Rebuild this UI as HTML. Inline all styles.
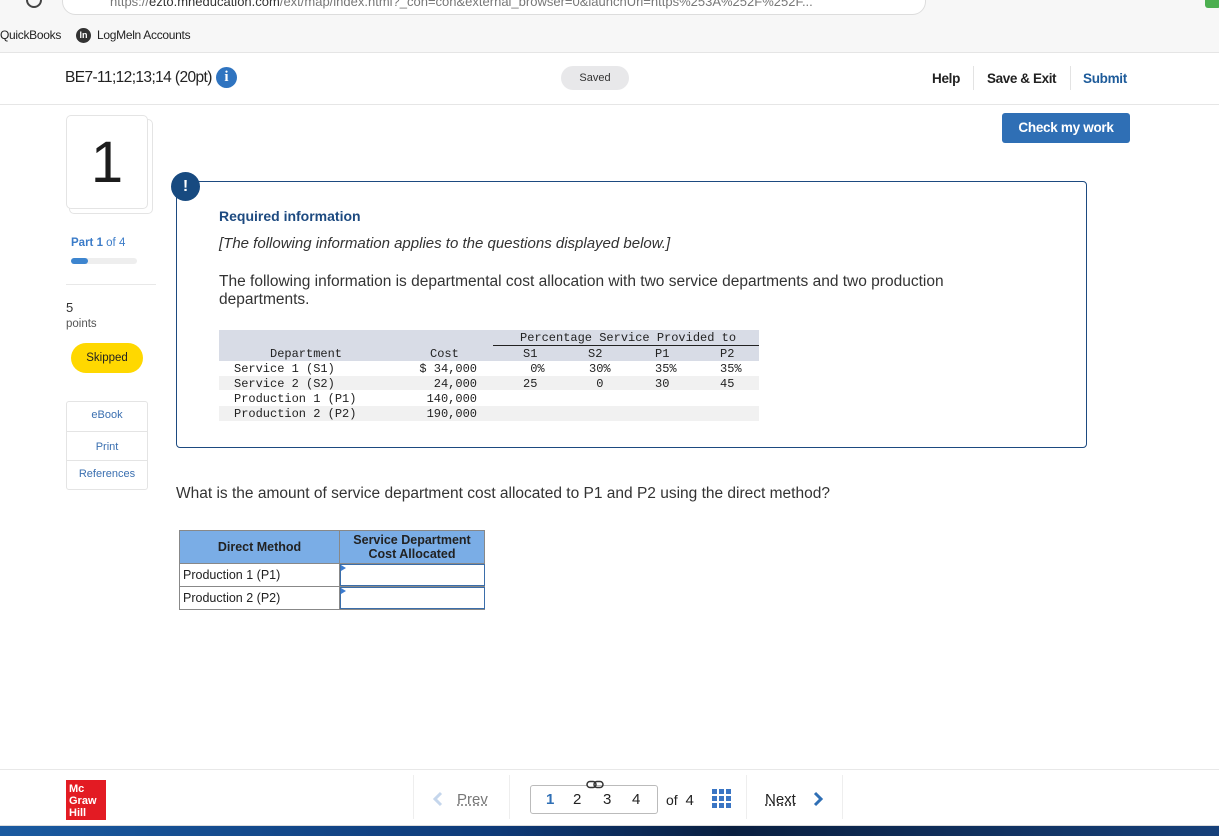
<!DOCTYPE html>
<html><head><meta charset="utf-8"><style>
*{box-sizing:border-box;margin:0;padding:0}
body{width:1219px;height:836px;overflow:hidden;background:#fff;font-family:"Liberation Sans",Arial,sans-serif;position:relative;color:#222}
.abs{position:absolute}
.mono{font-family:"Liberation Mono","DejaVu Sans Mono",monospace;font-size:12px;color:#222}
</style></head><body>
<div class="abs" style="left:0;top:0;width:1219px;height:53px;background:#f7f7f7;border-bottom:1px solid #e5e5e5"></div>
<div class="abs" style="left:62px;top:-12px;width:864px;height:27px;background:#fff;border:1px solid #ddd;border-radius:14px"></div>
<div class="abs" style="left:110px;top:-6px;font-size:13px;color:#777;white-space:nowrap">https://<b style="color:#333;font-weight:normal">ezto.mheducation.com</b>/ext/map/index.html?_con=con&amp;external_browser=0&amp;launchUrl=https%253A%252F%252F...</div>
<div class="abs" style="left:26px;top:-8px;width:16px;height:16px;border:2px solid #444;border-radius:50%"></div>
<div class="abs" style="left:0;top:28px;font-size:12px;color:#222;letter-spacing:-0.3px">QuickBooks</div>
<div class="abs" style="left:76px;top:28px;width:15px;height:15px;border-radius:50%;background:#333;color:#fff;font-size:9px;text-align:center;line-height:15px;font-weight:bold">ln</div>
<div class="abs" style="left:97px;top:28px;font-size:12px;color:#222;letter-spacing:-0.3px">LogMeln Accounts</div>
<div class="abs" style="left:1205px;top:-6px;width:16px;height:14px;background:#4caf50;border-radius:3px"></div>
<div class="abs" style="left:0;top:104px;width:1219px;height:1px;background:#e6e6e6"></div>
<div class="abs" style="left:65px;top:69px;font-size:15.5px;color:#222;letter-spacing:-0.6px">BE7-11;12;13;14 (20pt)</div>
<div class="abs" style="left:216px;top:67px;width:21px;height:21px;border-radius:50%;background:#2f74c0;color:#fff;font:bold 15px 'Liberation Serif',serif;text-align:center;line-height:21px">i</div>
<div class="abs" style="left:561px;top:66px;width:68px;height:24px;border-radius:12px;background:#e8e8ea;font-size:11px;color:#333;text-align:center;line-height:24px">Saved</div>
<div class="abs" style="left:932px;top:71px;font-size:13.5px;font-weight:bold;color:#222;letter-spacing:-0.3px">Help</div>
<div class="abs" style="left:973px;top:66px;width:1px;height:24px;background:#e3e3e3"></div>
<div class="abs" style="left:987px;top:71px;font-size:13.5px;font-weight:bold;color:#222;letter-spacing:-0.4px">Save &amp; Exit</div>
<div class="abs" style="left:1070px;top:66px;width:1px;height:24px;background:#e3e3e3"></div>
<div class="abs" style="left:1083px;top:71px;font-size:13.5px;font-weight:bold;color:#1d5b9a;letter-spacing:-0.3px">Submit</div>
<div class="abs" style="left:1002px;top:113px;width:128px;height:30px;background:#2f6fb5;border-radius:3px;color:#fff;font-size:13.5px;font-weight:bold;text-align:center;line-height:30px;letter-spacing:-0.3px">Check my work</div>
<div class="abs" style="left:69px;top:119px;width:84px;height:95px;border:1px solid #e4e4e4;border-radius:5px"></div>
<div class="abs" style="left:66px;top:115px;width:82px;height:94px;border:1px solid #e4e4e4;border-radius:5px;background:#fff;text-align:center;font-size:58px;line-height:94px;color:#1c1c1c">1</div>
<div class="abs" style="left:71px;top:237px;font-size:11.5px;color:#3a7bc8"><b>Part 1</b> of 4</div>
<div class="abs" style="left:71px;top:258px;width:66px;height:6px;border-radius:3px;background:#eee"></div>
<div class="abs" style="left:71px;top:258px;width:17px;height:6px;border-radius:3px;background:#3d85cf"></div>
<div class="abs" style="left:66px;top:284px;width:90px;height:1px;background:#e8e8e8"></div>
<div class="abs" style="left:66px;top:300px;font-size:13px;color:#333">5</div>
<div class="abs" style="left:66px;top:318px;font-size:11.5px;color:#555">points</div>
<div class="abs" style="left:71px;top:343px;width:72px;height:30px;border-radius:15px;background:#ffd800;font-size:11.5px;text-align:center;line-height:30px;color:#222">Skipped</div>
<div class="abs" style="left:66px;top:401px;width:82px;height:89px;border:1px solid #e4e4e4;border-radius:3px"></div>
<div class="abs" style="left:66px;top:431px;width:82px;height:1px;background:#e4e4e4"></div>
<div class="abs" style="left:66px;top:460px;width:82px;height:1px;background:#e4e4e4"></div>
<div class="abs" style="left:66px;top:409px;width:82px;text-align:center;font-size:11px;color:#3a6fb0">eBook</div>
<div class="abs" style="left:66px;top:441px;width:82px;text-align:center;font-size:11px;color:#3a6fb0">Print</div>
<div class="abs" style="left:66px;top:468px;width:82px;text-align:center;font-size:11px;color:#3a6fb0">References</div>
<div class="abs" style="left:176px;top:181px;width:911px;height:267px;border:1px solid #1d4a80;border-radius:4px"></div>
<div class="abs" style="left:171px;top:172px;width:29px;height:29px;border-radius:50%;background:#174a80;color:#fff;font-weight:bold;font-size:16px;text-align:center;line-height:29px">!</div>
<div class="abs" style="left:219px;top:208px;font-size:14px;font-weight:bold;color:#1d4a80">Required information</div>
<div class="abs" style="left:219px;top:235px;font-size:15px;font-style:italic;color:#333">[The following information applies to the questions displayed below.]</div>
<div class="abs" style="left:219px;top:273px;width:770px;font-size:15.5px;line-height:18px;color:#333">The following information is departmental cost allocation with two service departments and two production departments.</div>
<div class="abs" style="left:219px;top:330px;width:540px;height:31px;background:#d8dce6"></div>
<div class="abs" style="left:493px;top:345px;width:266px;height:1px;background:#222"></div>
<div class="abs" style="left:219px;top:376px;width:540px;height:14px;background:#f1f1f1"></div>
<div class="abs" style="left:219px;top:406px;width:540px;height:15px;background:#f1f1f1"></div>
<div class="abs mono" style="left:520px;top:331px">Percentage Service Provided to</div>
<div class="abs mono" style="left:270px;top:347px">Department</div>
<div class="abs mono" style="left:430px;top:347px">Cost</div>
<div class="abs mono" style="left:523px;top:347px">S1</div>
<div class="abs mono" style="left:588px;top:347px">S2</div>
<div class="abs mono" style="left:655px;top:347px">P1</div>
<div class="abs mono" style="left:720px;top:347px">P2</div>
<div class="abs mono" style="left:234px;top:362px;line-height:15px">Service 1 (S1)<br>Service 2 (S2)<br>Production 1 (P1)<br>Production 2 (P2)</div>
<div class="abs mono" style="left:400px;top:362px;width:77px;text-align:right;line-height:15px">$ 34,000<br>24,000<br>140,000<br>190,000</div>
<div class="abs mono" style="left:523px;top:362px;line-height:15px">&nbsp;0%<br>25</div>
<div class="abs mono" style="left:589px;top:362px;line-height:15px">30%<br>&nbsp;0</div>
<div class="abs mono" style="left:655px;top:362px;line-height:15px">35%<br>30</div>
<div class="abs mono" style="left:720px;top:362px;line-height:15px">35%<br>45</div>
<div class="abs" style="left:176px;top:485px;font-size:15.5px;color:#333">What is the amount of service department cost allocated to P1 and P2 using the direct method?</div>
<div class="abs" style="left:179px;top:530px;width:306px;height:80px;border:1px solid #888;background:#fff"></div>
<div class="abs" style="left:180px;top:531px;width:304px;height:32px;background:#7aade6"></div>
<div class="abs" style="left:339px;top:531px;width:1px;height:78px;background:#888"></div>
<div class="abs" style="left:180px;top:563px;width:304px;height:1px;background:#888"></div>
<div class="abs" style="left:180px;top:586px;width:304px;height:1px;background:#888"></div>
<div class="abs" style="left:180px;top:540px;width:159px;text-align:center;font:bold 12.5px 'Liberation Sans',Arial,sans-serif;color:#222">Direct Method</div>
<div class="abs" style="left:340px;top:533px;width:144px;text-align:center;font:bold 12.5px/14px 'Liberation Sans',Arial,sans-serif;color:#222">Service Department<br>Cost Allocated</div>
<div class="abs" style="left:183px;top:568px;font-size:12.5px">Production 1 (P1)</div>
<div class="abs" style="left:183px;top:591px;font-size:12.5px">Production 2 (P2)</div>
<div class="abs" style="left:340px;top:564px;width:145px;height:22px;border:1.5px solid #3b6eaa;background:#fff"></div>
<div class="abs" style="left:340px;top:587px;width:145px;height:22px;border:1.5px solid #3b6eaa;background:#fff"></div>
<div class="abs" style="left:341px;top:565px;width:0;height:0;border-top:3px solid transparent;border-bottom:3px solid transparent;border-left:5px solid #3b7bd0"></div>
<div class="abs" style="left:341px;top:588px;width:0;height:0;border-top:3px solid transparent;border-bottom:3px solid transparent;border-left:5px solid #3b7bd0"></div>
<div class="abs" style="left:0;top:769px;width:1219px;height:1px;background:#e8e8e8"></div>
<div class="abs" style="left:0;top:826px;width:1219px;height:10px;background:linear-gradient(90deg,#1a5aa0,#0e3b7a 40%,#0a1f40 60%,#16407a)"></div>
<div class="abs" style="left:0;top:825px;width:1219px;height:1px;background:#ddd"></div>
<div class="abs" style="left:66px;top:780px;width:40px;height:40px;background:#e31b23;color:#fff;font:bold 11px/12px 'Liberation Sans',Arial,sans-serif;padding:3px 0 0 3px">Mc<br>Graw<br>Hill</div>
<div class="abs" style="left:413px;top:775px;width:1px;height:44px;background:#eee"></div>
<div class="abs" style="left:509px;top:775px;width:1px;height:44px;background:#eee"></div>
<div class="abs" style="left:746px;top:775px;width:1px;height:44px;background:#eee"></div>
<div class="abs" style="left:842px;top:775px;width:1px;height:44px;background:#eee"></div>
<svg class="abs" style="left:432px;top:791px" width="12" height="16"><path d="M9 2 L3 8 L9 14" stroke="#c5d6ec" stroke-width="3" fill="none"/></svg>
<div class="abs" style="left:457px;top:791px;font-size:15px;color:#777;text-decoration:underline dotted">Prev</div>
<div class="abs" style="left:530px;top:785px;width:128px;height:29px;border:1px solid #bbb;border-radius:3px"></div>
<svg class="abs" style="left:586px;top:780px" width="18" height="9"><rect x="1" y="1.5" width="9" height="6" rx="3" stroke="#333" stroke-width="1.5" fill="#fff"/><rect x="8" y="1.5" width="9" height="6" rx="3" stroke="#333" stroke-width="1.5" fill="none"/></svg>
<div class="abs" style="left:546px;top:791px;font-size:15px;font-weight:bold;color:#2f6fb5">1</div>
<div class="abs" style="left:573px;top:791px;font-size:15px;color:#222">2</div>
<div class="abs" style="left:603px;top:791px;font-size:15px;color:#222">3</div>
<div class="abs" style="left:632px;top:791px;font-size:15px;color:#222">4</div>
<div class="abs" style="left:666px;top:792px;font-size:14px;color:#222">of&nbsp; <span style="font-size:15px">4</span></div>
<svg class="abs" style="left:712px;top:789px" width="19" height="19"><g fill="#3a75c4"><rect x="0" y="0" width="5" height="5"/><rect x="7" y="0" width="5" height="5"/><rect x="14" y="0" width="5" height="5"/><rect x="0" y="7" width="5" height="5"/><rect x="7" y="7" width="5" height="5"/><rect x="14" y="7" width="5" height="5"/><rect x="0" y="14" width="5" height="5"/><rect x="7" y="14" width="5" height="5"/><rect x="14" y="14" width="5" height="5"/></g></svg>
<div class="abs" style="left:765px;top:791px;font-size:15px;color:#222;text-decoration:underline dotted">Next</div>
<svg class="abs" style="left:812px;top:791px" width="12" height="16"><path d="M3 2 L9 8 L3 14" stroke="#2f6fb5" stroke-width="3" fill="none"/></svg>
</body></html>
